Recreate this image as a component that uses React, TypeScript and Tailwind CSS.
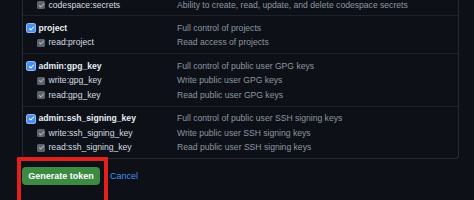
import React from "react";

type Row = { name: string; desc: string; parent?: boolean };

const groups: Row[][] = [
  [
    { name: "project", desc: "Full control of projects", parent: true },
    { name: "read:project", desc: "Read access of projects" },
  ],
  [
    { name: "admin:gpg_key", desc: "Full control of public user GPG keys", parent: true },
    { name: "write:gpg_key", desc: "Write public user GPG keys" },
    { name: "read:gpg_key", desc: "Read public user GPG keys" },
  ],
  [
    { name: "admin:ssh_signing_key", desc: "Full control of public user SSH signing keys", parent: true },
    { name: "write:ssh_signing_key", desc: "Write public user SSH signing keys" },
    { name: "read:ssh_signing_key", desc: "Read public user SSH signing keys" },
  ],
];

function Check({ parent }: { parent?: boolean }) {
  return (
    <span
      className={
        parent
          ? "flex h-[8px] w-[8px] shrink-0 items-center justify-center rounded-[1.5px] bg-[#4a8ef0] ring-1 ring-[#8fb6f5]"
          : "flex h-[8px] w-[8px] shrink-0 items-center justify-center rounded-[1.5px] bg-[#5d636b]"
      }
    >
      <svg viewBox="0 0 8 8" className="h-[7px] w-[7px]">
        <path
          d="M1.6 4.2 L3.2 5.7 L6.4 2.3"
          fill="none"
          stroke={parent ? "#ffffff" : "#b4b9bf"}
          strokeWidth="1.2"
          strokeLinecap="round"
          strokeLinejoin="round"
        />
      </svg>
    </span>
  );
}

function ScopeRow({ row }: { row: Row }) {
  return (
    <div className="flex h-[14.5px] items-center">
      <div
        className={
          row.parent
            ? "flex w-[154px] items-center gap-[3.5px] pl-[4px]"
            : "flex w-[154px] items-center gap-[3.5px] pl-[14px]"
        }
      >
        <Check parent={row.parent} />
        <span
          className={
            row.parent
              ? "font-bold text-[#e6edf3]"
              : "text-[#d6dce2]"
          }
        >
          {row.name}
        </span>
      </div>
      <span className="text-[#8d96a0]">{row.desc}</span>
    </div>
  );
}

export default function App() {
  return (
    <div
      className="relative h-[200px] w-[474px] overflow-hidden bg-[#0d1117] text-[8.6px] leading-none"
      style={{ fontFamily: '"Liberation Sans", Arial, sans-serif' }}
    >
      <div className="ml-[22px] w-[437px] rounded-b-[4px] border-x border-b border-[#262c35]">
        <div className="flex h-[16px] border-b border-[#1e232b] pt-0">
          <div className="flex h-[10px] items-center">
            <div className="flex w-[154px] items-center gap-[3.5px] pl-[14px]">
              <Check />
              <span className="text-[#d6dce2]">codespace:secrets</span>
            </div>
            <span className="text-[#8d96a0]">
              Ability to create, read, update, and delete codespace secrets
            </span>
          </div>
        </div>
        {groups.map((g, i) => (
          <div
            key={i}
            className={
              i < groups.length - 1
                ? "border-b border-[#1e232b] pb-[3px] pt-[5px]"
                : "pb-[3px] pt-[5px]"
            }
          >
            {g.map((r) => (
              <ScopeRow key={r.name} row={r} />
            ))}
          </div>
        ))}
      </div>

      <div className="ml-[22px] mt-[8px] flex items-center gap-[10px]">
        <button className="flex h-[18px] w-[78px] items-center justify-center rounded-[4px] bg-[#3d8a42] text-[9px] font-bold text-white">
          Generate token
        </button>
        <span className="text-[9px] text-[#4a8ff0]">Cancel</span>
      </div>

      <div className="pointer-events-none absolute left-[17px] top-[157px] h-[50px] w-[91px] border-[4px] border-[#e3201b]" />
    </div>
  );
}
